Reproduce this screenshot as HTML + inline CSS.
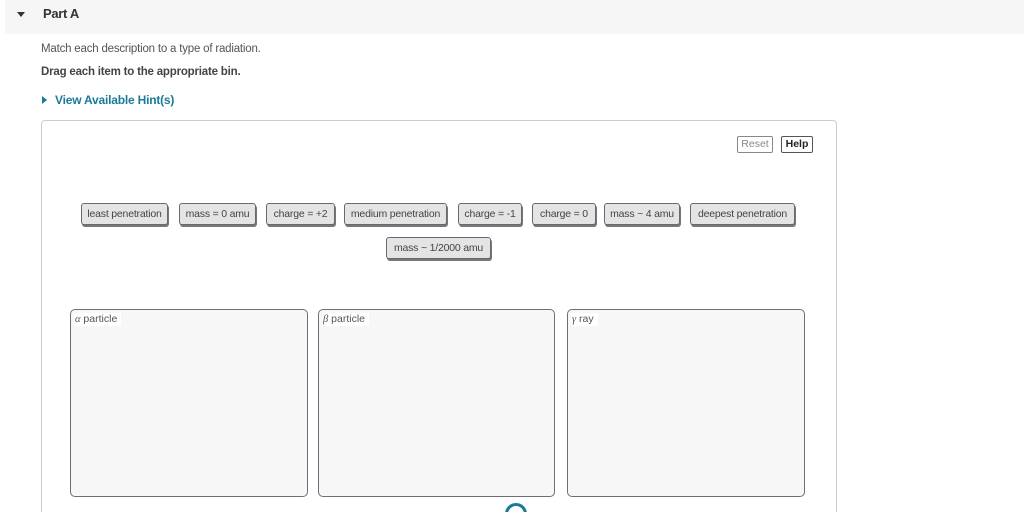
<!DOCTYPE html><html style="height:512px;overflow:hidden"><head><style>
body{margin:0;width:1024px;height:512px;overflow:hidden;background:#fff;font-family:"Liberation Sans",Arial,sans-serif;position:relative}
.a{position:absolute}
.hdr{left:5px;top:0;width:1019px;height:34px;background:#f6f6f6}
.chip{position:absolute;height:22px;border:1px solid #666a75;border-radius:3px;background:#e4e4e4;box-shadow:1px 2px 0 #777;font-size:10.5px;color:#444;line-height:21px;text-align:center;box-sizing:border-box;white-space:nowrap;letter-spacing:-0.2px}
.bin{position:absolute;top:309px;height:188px;border:1.5px solid #6e6e7a;border-radius:5px;background:#f7f7f7;box-sizing:border-box}
.bin span{position:absolute;left:3px;top:3px;font-size:10.5px;color:#555;background:#fff;padding:0 4px 1px 1px}
.btn{position:absolute;top:136px;height:17px;border:1px solid #888;border-radius:2px;font-size:10.5px;line-height:15px;text-align:center;box-sizing:border-box;background:#fff}
</style></head><body>
<div class="a hdr"></div>
<div class="a" style="left:17px;top:12px;width:0;height:0;border-left:4px solid transparent;border-right:4px solid transparent;border-top:5px solid #333"></div>
<div class="a" style="left:43px;top:6px;font-size:13px;color:#333;font-weight:bold;letter-spacing:-0.3px">Part A</div>
<div class="a" style="left:41px;top:43px;font-size:11.5px;color:#555;letter-spacing:-0.2px">Match each description to a type of radiation.</div>
<div class="a" style="left:41px;top:66px;font-size:11.5px;color:#444;font-weight:bold;letter-spacing:-0.2px">Drag each item to the appropriate bin.</div>
<div class="a" style="left:42px;top:96px;width:0;height:0;border-top:4px solid transparent;border-bottom:4px solid transparent;border-left:5px solid #1a7a99"></div>
<div class="a" style="left:55px;top:93px;font-size:12px;color:#1a7a99;font-weight:bold;letter-spacing:-0.2px">View Available Hint(s)</div>
<div class="a" style="left:41px;top:120px;width:796px;height:392px;border:1px solid #ccc;border-bottom:none;border-radius:4px 4px 0 0;box-sizing:border-box"></div>
<div class="btn" style="left:737px;width:36px;color:#888">Reset</div>
<div class="btn" style="left:781px;width:32px;color:#222;font-weight:bold;border-color:#555">Help</div>
<div class="chip" style="left:81px;top:203px;width:87px">least penetration</div>
<div class="chip" style="left:179px;top:203px;width:77px">mass = 0 amu</div>
<div class="chip" style="left:266px;top:203px;width:69px">charge = +2</div>
<div class="chip" style="left:344px;top:203px;width:103px">medium penetration</div>
<div class="chip" style="left:458px;top:203px;width:64px">charge = -1</div>
<div class="chip" style="left:532px;top:203px;width:64px">charge = 0</div>
<div class="chip" style="left:604px;top:203px;width:76px">mass ~ 4 amu</div>
<div class="chip" style="left:690px;top:203px;width:105px">deepest penetration</div>
<div class="chip" style="left:386px;top:237px;width:105px">mass ~ 1/2000 amu</div>
<div class="bin" style="left:70px;width:238px"><span><i style="font-family:'Liberation Serif',serif">α</i> particle</span></div>
<div class="bin" style="left:318px;width:237px"><span><i style="font-family:'Liberation Serif',serif">β</i> particle</span></div>
<div class="bin" style="left:567px;width:238px"><span><i style="font-family:'Liberation Serif',serif">γ</i> ray</span></div>
<div class="a" style="left:505px;top:503px;width:22px;height:9px;overflow:hidden"><div style="width:22px;height:22px;border-radius:50%;border:3px solid #1a7a99;box-sizing:border-box"></div></div>
</body></html>
